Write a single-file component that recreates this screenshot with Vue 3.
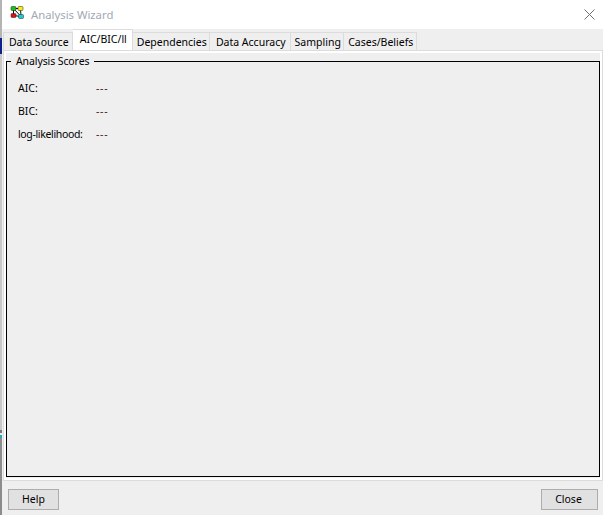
<script setup>
const tabs = [
  { label: 'Data Source', width: 70 },
  { label: 'AIC/BIC/ll', width: 60, active: true },
  { label: 'Dependencies', width: 77 },
  { label: 'Data Accuracy', width: 81 },
  { label: 'Sampling', width: 53 },
  { label: 'Cases/Beliefs', width: 73 },
]
const scores = [
  { name: 'AIC:', value: '---' },
  { name: 'BIC:', value: '---' },
  { name: 'log-likelihood:', value: '---' },
]
</script>

<template>
  <div class="desktop">
    <div class="edge">
      <span class="edge-top"></span>
      <span class="edge-blue"></span>
      <span class="edge-mid"></span>
      <span class="edge-tick"></span>
      <span class="edge-low"></span>
    </div>
    <div class="window">
      <header class="titlebar">
        <svg class="app-icon" width="16" height="16" viewBox="0 0 16 16">
          <path d="M3.5 2.5H10.5M3.5 2.5V9.5M10.5 2.5L11 10.5M3.5 9.5L11 10.5M3.5 2.5L11 10.5" stroke="#111" stroke-width="1" fill="none" />
          <rect x="1" y=".5" width="5" height="4" rx="1" fill="#10c810" stroke="#222" stroke-width=".5" />
          <rect x="8" y=".5" width="5" height="4" rx="1" fill="#f4f010" stroke="#222" stroke-width=".5" />
          <rect x="1" y="7.5" width="5" height="4" rx="1" fill="#e01010" stroke="#222" stroke-width=".5" />
          <rect x="8.5" y="8.5" width="5" height="4" rx="1" fill="#10d0d0" stroke="#222" stroke-width=".5" />
        </svg>
        <span class="title">Analysis Wizard</span>
        <svg class="close-x" width="11" height="11" viewBox="0 0 11 11">
          <path d="M.5.5L10.5 10.5M10.5.5L.5 10.5" stroke="#707070" stroke-width="1" fill="none" />
        </svg>
      </header>
      <div class="body">
        <nav class="tabs">
          <div
            v-for="t in tabs"
            :key="t.label"
            class="tab"
            :class="{ active: t.active }"
            :style="{ width: t.width + 'px' }"
          >{{ t.label }}</div>
        </nav>
        <section class="panel">
          <fieldset class="group">
            <legend>Analysis Scores</legend>
            <div class="scores">
              <div v-for="s in scores" :key="s.name" class="score">
                <span class="name">{{ s.name }}</span>
                <span class="value">{{ s.value }}</span>
              </div>
            </div>
          </fieldset>
        </section>
        <footer class="actions">
          <button class="btn">Help</button>
          <button class="btn">Close</button>
        </footer>
      </div>
    </div>
  </div>
</template>

<style>
html, body { margin: 0; background: #fff; overflow: hidden; }
</style>

<style scoped>
.desktop {
  width: 603px;
  height: 515px;
  display: flex;
  font-family: "Noto Sans", "Open Sans", sans-serif;
  font-size: 10.5px;
  color: #000;
  overflow: hidden;
}
.edge { width: 2px; flex: none; display: flex; flex-direction: column; }
.edge span { display: block; }
.edge-top { height: 38px; background: #b4b4b4; }
.edge-blue { height: 16px; background: #10228a; }
.edge-mid { height: 376px; background: #c8c8c8; }
.edge-tick { height: 8px; background: linear-gradient(#777 0 40%, #e8e8e8 40% 60%, #2aa7c0 60%); }
.edge-low { flex: 1; background: #8c8c8c; }
.window { flex: 1; display: flex; flex-direction: column; min-width: 0; }
.titlebar {
  height: 29px;
  box-sizing: border-box;
  background: #fff;
  display: flex;
  align-items: center;
  padding: 0 8px 1px 8px;
  flex: none;
}
.app-icon { flex: none; }
.title { margin-left: 5px; font-size: 11.3px; color: #a0aab4; }
.close-x { margin-left: auto; }
.body { flex: 1; background: #efefef; display: flex; flex-direction: column; min-height: 0; }
.tabs { display: flex; height: 21px; padding-left: 1px; box-sizing: border-box; align-items: flex-end; flex: none; }
.tab {
  height: 18px;
  line-height: 19px;
  box-sizing: border-box;
  padding-left: 1.5px;
  text-align: center;
  white-space: nowrap;
  border: 1px solid #dcdcdc;
  border-bottom: none;
  border-left: none;
  background: #efefef;
}
.tab:first-child { border-left: 1px solid #dcdcdc; }
.tab.active {
  height: 21px;
  background: #fff;
  line-height: 19px;
}
.panel {
  flex: none;
  height: 431px;
  box-sizing: border-box;
  margin-left: 1px;
  background: #efefef;
  border: 1px solid #dcdcdc;
  box-shadow: inset 0 0 0 2px #fff;
  padding: 4px 2px 3px 2px;
  display: flex;
}
.group {
  flex: 1;
  margin: 0;
  padding: 0 0 0 11px;
  border: 1px solid #000;
  min-width: 0;
}
legend { padding: 0 5px; margin-left: -7px; line-height: 13px; letter-spacing: -.1px; }
.scores { display: flex; flex-direction: column; gap: 8px; padding-top: 13px; }
.score { display: flex; line-height: 15px; }
.score:last-child .name { letter-spacing: -.35px; }
.name { width: 78px; }
.value { color: #3a2418; letter-spacing: .7px; }
.actions { flex: 1; display: flex; justify-content: space-between; align-items: flex-start; padding: 8px 5px 0 6px; }
.btn {
  width: 51px;
  height: 21px;
  padding: 0 0 2px;
  font: inherit;
  color: #000;
  background: #e1e1e1;
  border: 1px solid #adadad;
}
.btn:last-child { width: 57px; padding-right: 2px; }
</style>
